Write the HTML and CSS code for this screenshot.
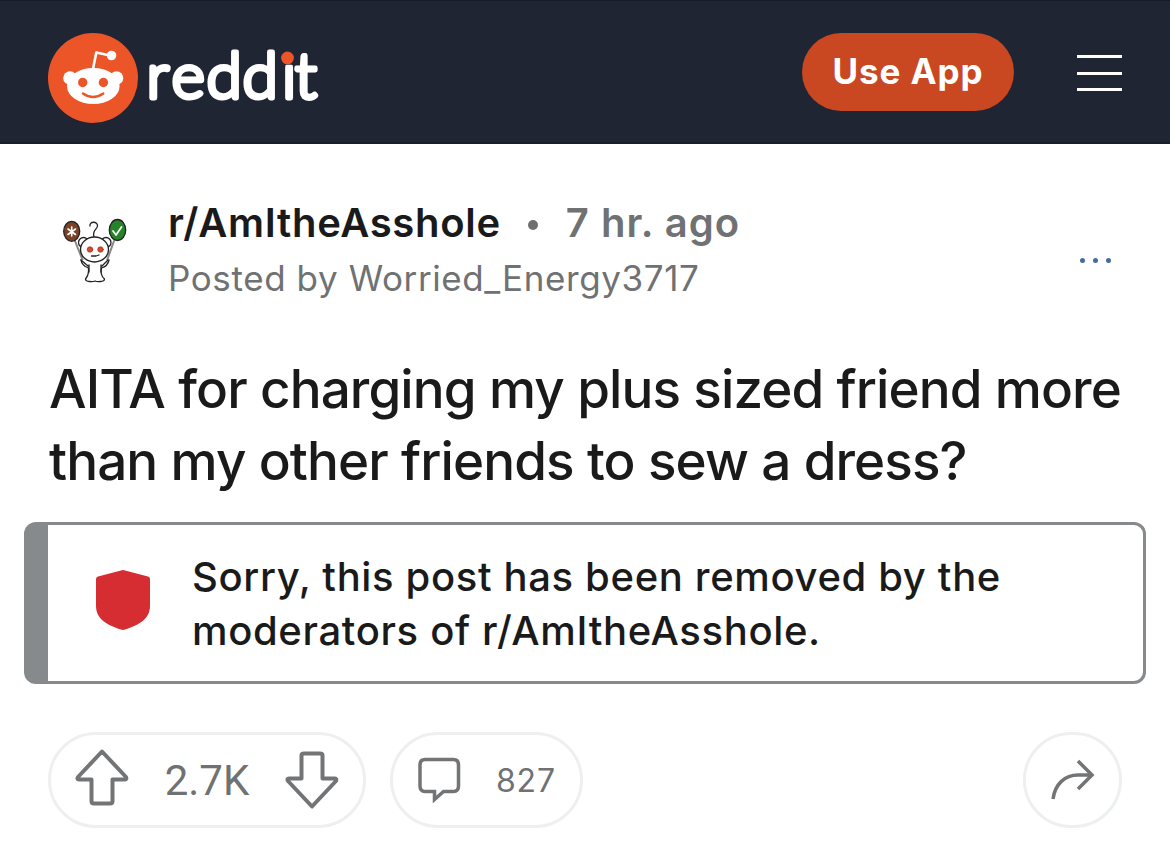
FILE: index.html
```html
<!DOCTYPE html>
<html lang="en">
<head>
    <meta charset="UTF-8">
    <meta name="viewport" content="width=device-width, initial-scale=1.0">
    <title>AITA for charging my plus sized friend more than my other friends to sew a dress?</title>
    <link rel="stylesheet" href="styles.css">
</head>
<body>
    <!-- Top bar -->
    <header class="header">
        <a href="#" class="logo">
            <svg width="300" height="100" viewBox="0 0 300 100">
                <circle cx="45" cy="45" r="45" fill="#eb5528"/>
                <g fill="#fff">
                    <circle cx="22" cy="45" r="6.8"/>
                    <circle cx="68.5" cy="45" r="6.8"/>
                    <ellipse cx="45.3" cy="53" rx="26.3" ry="18"/>
                    <circle cx="63.5" cy="22.5" r="4.8"/>
                    <path d="M45 36 L48.3 19.5 L62 22.5" fill="none" stroke="#fff" stroke-width="2.6" stroke-linejoin="round"/>
                </g>
                <circle cx="34.7" cy="49.5" r="4.7" fill="#eb5528"/>
                <circle cx="55.4" cy="49.5" r="4.7" fill="#eb5528"/>
                <path d="M35 60.5 Q45 67.5 55.3 60.5" fill="none" stroke="#eb5528" stroke-width="2.4" stroke-linecap="round"/>
                <text class="wordmark" x="98.5 123.5 158.5 194.5 234 247" y="64.5">reddit</text>
                <!-- orange dot of the i -->
                <rect x="232" y="10" width="15" height="21.5" fill="#202534"/>
                <circle cx="239.5" cy="25" r="6.4" fill="#eb5528"/>
            </svg>
        </a>
        <div class="header-right">
            <a href="#" class="use-app">Use App</a>
            <button class="menu-btn" aria-label="Menu">
                <span></span>
                <span></span>
                <span></span>
            </button>
        </div>
    </header>

    <main class="post">
        <div class="post-header">
            <svg class="avatar" width="72" height="72" viewBox="0 0 72 72" fill="none" stroke="#222" stroke-width="1.3" stroke-linecap="round" stroke-linejoin="round">
                <path d="M15 29 L25 54 M54 29 L45 54" stroke="#888" stroke-width="2"/>
                <ellipse cx="11.7" cy="19.3" rx="8" ry="10" fill="#7a4326"/>
                <ellipse cx="57.5" cy="18" rx="8.2" ry="10.5" fill="#26832a"/>
                <path d="M11.7 15 V24 M8 17 L15.5 22.5 M15.5 17 L8 22.5" stroke="#fff" stroke-width="1.6"/>
                <path d="M53 19 L56 23 L61.5 15" stroke="#fff" stroke-width="1.7"/>
                <path d="M30 14 C29 9 38 9 37.5 14 C37 18 32 18 34 25"/>
                <circle cx="23.5" cy="30.5" r="5" fill="#fff"/>
                <circle cx="46" cy="30.5" r="5" fill="#fff"/>
                <path d="M21 48 C22 54 26 55 28.5 56 C29 61 28 64 25.5 67 C25 70 33 70 35 69 C37 70 45 70 44.5 67 C41 64 40.5 60 41.5 56 C45 55 48 53 49 48" fill="#fff"/>
                <ellipse cx="34.5" cy="37.5" rx="14" ry="12.5" fill="#fff"/>
                <path d="M29 53 V60 M41 53 V60 M21 48 L28 54 M48 48 L42 54"/>
                <circle cx="30" cy="37.5" r="2.8" fill="#d8482c" stroke="#8c2f1e" stroke-width=".6"/>
                <circle cx="40.5" cy="37.5" r="2.8" fill="#d8482c" stroke="#8c2f1e" stroke-width=".6"/>
                <path d="M31.5 44 H36 L39 43"/>
            </svg>
            <div class="post-meta">
                <div class="meta-top">
                    <a href="#" class="subreddit">r/AmItheAsshole</a>
                    <span class="dot"></span>
                    <span class="time">7 hr. ago</span>
                </div>
                <div class="author">Posted by Worried_Energy3717</div>
            </div>
            <button class="more-btn" aria-label="More">
                <span></span>
                <span></span>
                <span></span>
            </button>
        </div>

        <h1>AITA for charging my plus sized friend more<br>than my other friends to sew a dress?</h1>

        <!-- Removed notice -->
        <div class="notice">
            <svg width="54" height="60" viewBox="0 0 54 60">
                <path d="M27 0 Q27.8 0 29 .4 L52 6.4 Q54 7 54 9 V36 C54 49 43 55 29 59.6 Q27 60.3 25 59.6 C11 55 0 49 0 36 V9 Q0 7 2 6.4 L25 .4 Q26.2 0 27 0 Z" fill="#d62d32"/>
            </svg>
            <p>Sorry, this post has been removed by the<br>moderators of r/AmItheAsshole.</p>
        </div>

        <div class="actions">
            <div class="pill votes">
                <svg class="upvote" width="54" height="58" viewBox="0 0 54 58">
                    <path d="M27 2.5 L51 28 Q52 30.5 50 30.5 H37.5 V52 Q37.5 54.5 35 54.5 H19 Q16.5 54.5 16.5 52 V30.5 H4 Q1.5 30.5 3 28 Z"/>
                </svg>
                <span class="score">2.7K</span>
                <svg width="54" height="58" viewBox="0 0 54 58">
                    <path d="M27 55.5 L51 30 Q52 27.5 50 27.5 H37.5 V4.5 Q37.5 2.5 35 2.5 H19 Q16.5 2.5 16.5 4.5 V27.5 H4 Q1.5 27.5 3 30 Z"/>
                </svg>
            </div>
            <div class="pill comments">
                <svg width="44" height="46" viewBox="0 0 44 46">
                    <path class="bubble" d="M7 2.5 H35.5 Q40.5 2.5 40.5 8 V29 Q40.5 34.5 35.5 34.5 H25.5 L16.5 42.5 V34.5 H7 Q2 34.5 2 29 V8 Q2 2.5 7 2.5 Z"/>
                </svg>
                <span class="count">827</span>
            </div>
            <div class="pill share">
                <svg width="44" height="42" viewBox="0 0 44 42">
                    <path d="M2 40 C4 25 14 16 27 16 H41 M27 2 L41 16 L27 30"/>
                </svg>
            </div>
        </div>
    </main>
</body>
</html>
```

FILE: styles.css
```css
* {
    box-sizing: border-box;
}

body {
    margin: 0;
    font-family: Inter, "Liberation Sans", sans-serif;
    background-color: #fff;
    color: #1a1a1b;
}

a {
    color: inherit;
    text-decoration: none;
}

button {
    border: none;
    background: none;
    padding: 0;
    cursor: pointer;
}

svg {
    display: block;
    flex-shrink: 0;
}

/* Top bar */
.header {
    display: flex;
    justify-content: space-between;
    height: 144px;
    padding: 32px 48px 0;
    background-color: #202534;
    border-top: 1px solid #171b28;
    border-bottom: 2px solid #1a1e2b;
}

.wordmark {
    font-family: Lato, sans-serif;
    font-size: 64px;
    font-weight: 300;
    fill: #fff;
    stroke: #fff;
    stroke-width: 4.8;
    stroke-linejoin: round;
}

.header-right {
    display: flex;
    align-items: flex-start;
    gap: 63px;
}

.use-app {
    width: 212px;
    height: 78px;
    border-radius: 39px;
    background-color: #c94721;
    color: #fff;
    font-size: 35px;
    font-weight: 700;
    line-height: 76px;
    letter-spacing: 0.9px;
    text-align: center;
}

.menu-btn {
    display: flex;
    flex-direction: column;
    gap: 13.5px;
    width: 45px;
    margin-top: 22px;
}

.menu-btn span {
    height: 3px;
    background-color: #fff;
}

/* Post header */
.post-header {
    display: flex;
    height: 108px;
    margin: 54px 48px 0 60px;
}

.avatar {
    margin-top: 14px;
}

.post-meta {
    flex: 1;
    margin-left: 36px;
    white-space: nowrap;
}

.meta-top {
    display: flex;
    align-items: center;
    height: 48px;
    font-size: 40px;
    font-weight: 600;
}

.subreddit {
    letter-spacing: 0.7px;
}

.dot {
    width: 10px;
    height: 10px;
    margin: 6px 28px 0 27px;
    border-radius: 50%;
    background-color: #6d6f71;
}

.time {
    letter-spacing: 1px;
}

.time,
.author {
    color: #6f7173;
}

.author {
    margin-top: 7px;
    font-size: 35px;
    line-height: 50px;
    letter-spacing: 0.6px;
}

.more-btn {
    display: flex;
    gap: 8px;
    margin: 60px 11px 0 0;
}

.more-btn span {
    width: 5px;
    height: 5px;
    border-radius: 50%;
    background-color: #466c9b;
}

h1 {
    margin: 47px 0 0 49px;
    font-size: 53px;
    font-weight: 500;
    line-height: 72px;
    letter-spacing: -0.9px;
    white-space: nowrap;
}

/* Removed notice */
.notice {
    display: flex;
    height: 162px;
    margin: 25px 24px 0;
    padding: 45px 0 0 48px;
    border: 3px solid #878a8c;
    border-left-width: 24px;
    border-radius: 12px;
}

.notice p {
    margin: -20px 0 0 42px;
    font-size: 40px;
    font-weight: 500;
    line-height: 54px;
    letter-spacing: 0.65px;
    white-space: nowrap;
}

/* Buttons under the post */
.actions {
    display: flex;
    margin: 48px 48px 0;
}

.pill {
    display: flex;
    align-items: center;
    height: 96px;
    border: 3px solid #edeff1;
    border-radius: 48px;
    color: #6f7173;
}

.pill path {
    fill: none;
    stroke: #727476;
    stroke-width: 4;
    stroke-linejoin: round;
}

.votes {
    justify-content: space-between;
    width: 318px;
    padding: 0 24px;
}

.upvote {
    margin-bottom: 4px;
}

.score {
    font-family: Roboto, sans-serif;
    font-size: 42px;
}

.comments {
    width: 193px;
    margin-left: 24px;
    padding-left: 25px;
}

.pill .bubble {
    stroke-width: 3.5;
    stroke-linejoin: miter;
}

.count {
    margin-left: 34px;
    font-size: 32px;
    letter-spacing: 0.8px;
}

.share {
    justify-content: center;
    width: 99px;
    margin-left: auto;
}

.share path {
    stroke-width: 3.5;
    stroke-linejoin: miter;
}
```
